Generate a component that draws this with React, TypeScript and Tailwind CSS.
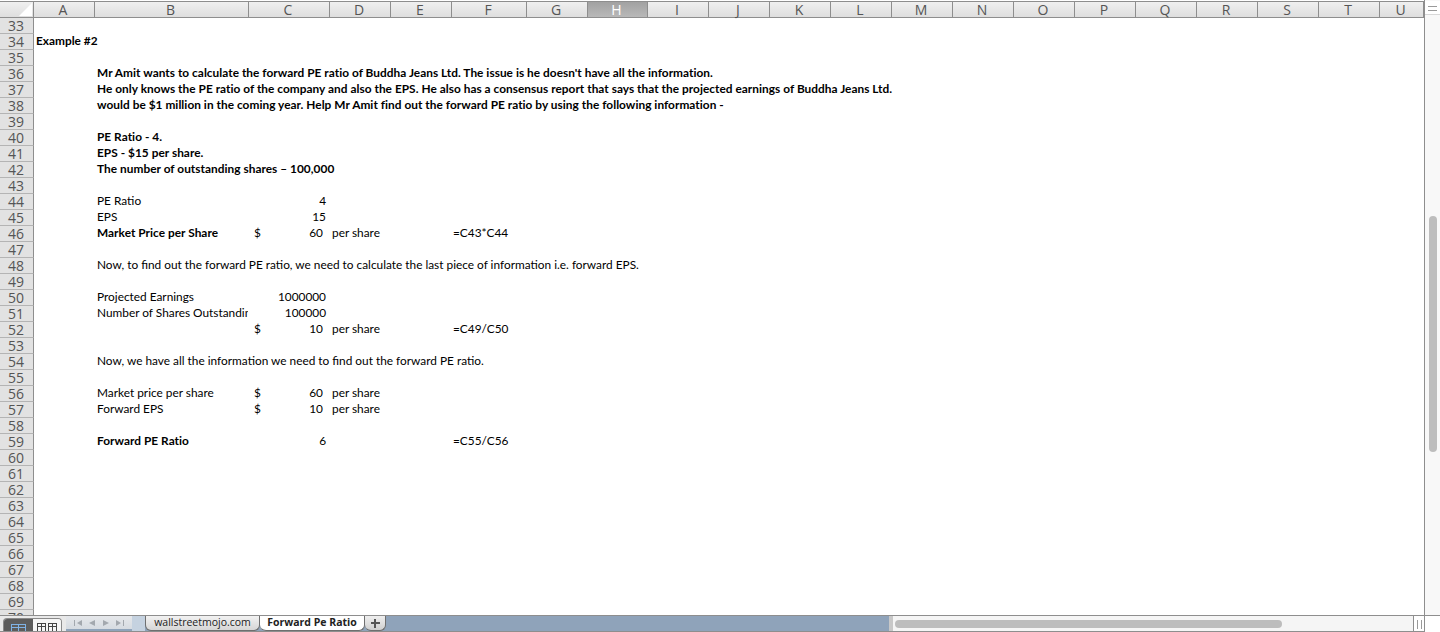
const cols: [string, number][] = [
  ["A", 61], ["B", 154], ["C", 81], ["D", 61], ["E", 61], ["F", 75], ["G", 61], ["H", 60], ["I", 61], ["J", 61],
  ["K", 61], ["L", 61], ["M", 61], ["N", 61], ["O", 61], ["P", 61], ["Q", 61], ["R", 61], ["S", 61], ["T", 61], ["U", 44],
];

type R = { a?: string; b?: string; bold?: boolean; dollar?: boolean; val?: string; acc?: boolean; d?: string; f?: string; clip?: boolean };

const data: Record<number, R> = {
  34: { a: "Example #2", bold: true },
  36: { b: "Mr Amit wants to calculate the forward PE ratio of Buddha Jeans Ltd. The issue is he doesn't have all the information.", bold: true },
  37: { b: "He only knows the PE ratio of the company and also the EPS. He also has a consensus report that says that the projected earnings of Buddha Jeans Ltd.", bold: true },
  38: { b: "would be $1 million in the coming year. Help Mr Amit find out the forward PE ratio by using the following information -", bold: true },
  40: { b: "PE Ratio - 4.", bold: true },
  41: { b: "EPS - $15 per share.", bold: true },
  42: { b: "The number of outstanding shares – 100,000", bold: true },
  44: { b: "PE Ratio", val: "4" },
  45: { b: "EPS", val: "15" },
  46: { b: "Market Price per Share", bold: true, dollar: true, val: "60", acc: true, d: "per share", f: "=C43*C44" },
  48: { b: "Now, to find out the forward PE ratio, we need to calculate the last piece of information i.e. forward EPS." },
  50: { b: "Projected Earnings", val: "1000000" },
  51: { b: "Number of Shares Outstanding", val: "100000", clip: true },
  52: { dollar: true, val: "10", acc: true, d: "per share", f: "=C49/C50" },
  54: { b: "Now, we have all the information we need to find out the forward PE ratio." },
  56: { b: "Market price per share", dollar: true, val: "60", acc: true, d: "per share" },
  57: { b: "Forward EPS", dollar: true, val: "10", acc: true, d: "per share" },
  59: { b: "Forward PE Ratio", bold: true, val: "6", f: "=C55/C56" },
};

const rowNums = Array.from({ length: 38 }, (_, i) => 33 + i);

function Row({ n }: { n: number }) {
  const r = data[n] ?? {};
  return (
    <div className="flex h-4 shrink-0 leading-[14px]">
      <div className="w-[34px] shrink-0 bg-[#e2e2e2] border-b border-b-[#b4b4b4] border-r border-r-[#8e8e8e] pr-[1px] text-center text-[14px] leading-[16px] font-medium text-[#555555] font-['Open_Sans',sans-serif]">
        {n}
      </div>
      <div className={`w-[60px] shrink-0 pl-[2px] whitespace-nowrap ${r.bold ? "font-bold" : ""}`}>{r.a}</div>
      <div className={`w-[154px] shrink-0 pl-[3px] whitespace-nowrap ${r.clip ? "overflow-hidden" : ""} ${r.bold ? "font-bold tracking-[0.035px]" : ""}`}>{r.b}</div>
      <div className="w-[81px] shrink-0 flex justify-between pl-[6px] pr-[3px]">
        <span>{r.dollar ? "$" : ""}</span>
        <span className={r.acc ? "pr-[3px]" : ""}>{r.val}</span>
      </div>
      <div className="w-[122px] shrink-0 pl-[3px]">{r.d}</div>
      <div className="w-[75px] shrink-0 pl-[2px] whitespace-nowrap">{r.f}</div>
    </div>
  );
}

function Nav() {
  return (
    <div className="w-[66px] h-[13px] flex items-center justify-around px-[4px] bg-gradient-to-b from-[#e6e8eb] to-[#d6dbe1] text-[#a3a8ae]">
      <svg width="10" height="8" viewBox="0 0 10 8" fill="currentColor"><rect x="1" y="1" width="1" height="6" /><path d="M9 1v6L4 4z" /></svg>
      <svg width="8" height="8" viewBox="0 0 8 8" fill="currentColor"><path d="M7 1v6L1 4z" /></svg>
      <svg width="8" height="8" viewBox="0 0 8 8" fill="currentColor"><path d="M1 1v6l6-3z" /></svg>
      <svg width="10" height="8" viewBox="0 0 10 8" fill="currentColor"><rect x="8" y="1" width="1" height="6" /><path d="M1 1v6l5-3z" /></svg>
    </div>
  );
}

function Grid({ w, h, color }: { w: number; h: number; color: string }) {
  return (
    <svg width={w} height={h} viewBox={`0 0 ${w} ${h}`} fill="none" stroke={color} strokeWidth="1" shapeRendering="crispEdges">
      <rect x="0.5" y="0.5" width={w - 1} height={h + 2} />
      <path d={`M${Math.floor(w / 2) + 0.5} 0V${h}M0 3.5H${w}`} />
    </svg>
  );
}

export default function App() {
  return (
    <div className="w-[1440px] h-[632px] overflow-hidden bg-white flex flex-col text-[11.85px] text-black font-['Lato',sans-serif]">
      <div className="flex flex-1 min-h-0">
        <div className="w-[1424px] shrink-0 flex flex-col overflow-hidden">
          <div className="flex h-[17px] mt-px shrink-0 border-t border-t-[#8e8e8e] border-b border-b-[#8e8e8e] bg-gradient-to-b from-[#f0f0f0] to-[#dedede]">
            <div className="w-[34px] shrink-0 border-r border-r-[#8e8e8e] flex items-end justify-end pr-[1px] pb-[1px]">
              <div className="w-0 h-0 border-l-[13px] border-l-transparent border-b-[13px] border-b-white" />
            </div>
            {cols.map(([c, w]) => (
              <div
                key={c}
                style={{ width: w }}
                className={`shrink-0 flex items-center justify-center border-r border-r-[#8e8e8e] pr-[2px] text-[14px] font-medium font-['Open_Sans',sans-serif] ${c === "H" ? "bg-gradient-to-b from-[#a2a2a2] to-[#b8b8b8] text-white" : "text-[#555555]"}`}
              >
                {c}
              </div>
            ))}
          </div>
          <div className="flex flex-col flex-1 min-h-0 overflow-hidden">
            {rowNums.map((n) => <Row key={n} n={n} />)}
          </div>
        </div>
        <div className="w-[16px] shrink-0 border-l border-l-[#8e8e8e] bg-[#f8f8f8] flex flex-col items-center">
          <div className="w-full h-[14px] mt-px pt-[1px] bg-white border-b border-b-[#d8d8d8] flex flex-col items-center justify-center gap-[3px]">
            <div className="w-[9px] h-px bg-[#9a9a9a]" />
            <div className="w-[9px] h-px bg-[#9a9a9a]" />
          </div>
          <div className="w-[8px] h-[236px] mt-[201px] rounded-full bg-[#bdbdbd]" />
        </div>
      </div>
      <div className="h-[17px] shrink-0 flex border-t border-t-[#8e8e8e]">
        <div className="flex flex-1 min-w-0 bg-[#8fa3ba] border-b border-b-[#8e8e8e]">
          <div className="w-[66px] shrink-0 bg-[#e9e9e9] flex items-end pl-[3px]">
            <div className="flex h-[13px] w-[59px] rounded-t-[4px] overflow-hidden border border-[#8a8a8a] border-b-0">
              <div className="w-[29px] bg-[#5c5c5c] flex items-end justify-center">
                <Grid w={15} h={7} color="#7fb2e5" />
              </div>
              <div className="flex-1 bg-[#f6f6f6] flex items-end justify-center gap-[2px]">
                <Grid w={9} h={8} color="#444444" />
                <Grid w={9} h={8} color="#444444" />
              </div>
            </div>
          </div>
          <Nav />
          <div className="w-[13px] h-[15px] bg-[#c5d2e0] shrink-0" />
          <div className="flex items-start text-[10.5px] font-['Open_Sans',sans-serif]">
            <div className="h-[15px] w-[115px] bg-gradient-to-b from-[#f2f2f2] to-[#d6d6d6] border border-t-0 border-[#6f6f6f] rounded-b-[6px] text-center leading-[13px] text-[#222222]">
              wallstreetmojo.com
            </div>
            <div className="h-[15px] w-[105px] bg-white border-b border-r border-[#6f6f6f] rounded-b-[6px] text-center leading-[13px] font-bold text-[#222222]">
              Forward Pe Ratio
            </div>
            <div className="h-[15px] w-[21px] flex items-center justify-center bg-gradient-to-b from-[#efefef] to-[#cfcfcf] border border-t-0 border-l-0 border-[#6f6f6f] rounded-b-[6px] text-[#555555]">
              <svg width="9" height="9" viewBox="0 0 9 9" fill="currentColor" shapeRendering="crispEdges">
                <rect x="3" y="0" width="2" height="9" />
                <rect x="0" y="3" width="9" height="2" />
              </svg>
            </div>
          </div>
          <div className="flex-1" />
          <div className="w-[4px] shrink-0 bg-[#c8c8c8]" />
          <div className="w-[520px] shrink-0 bg-[#f5f5f5] flex items-center pl-[2px]">
            <div className="w-[387px] h-[8px] rounded-full bg-[#bdbdbd]" />
          </div>
          <div className="w-[12px] shrink-0 bg-white border-x border-x-[#8e8e8e] flex justify-center gap-[3px] pt-[4px]">
            <div className="w-px h-[9px] bg-[#9a9a9a]" />
            <div className="w-px h-[9px] bg-[#9a9a9a]" />
          </div>
        </div>
        <div className="w-[15px] shrink-0 bg-white" />
      </div>
    </div>
  );
}
